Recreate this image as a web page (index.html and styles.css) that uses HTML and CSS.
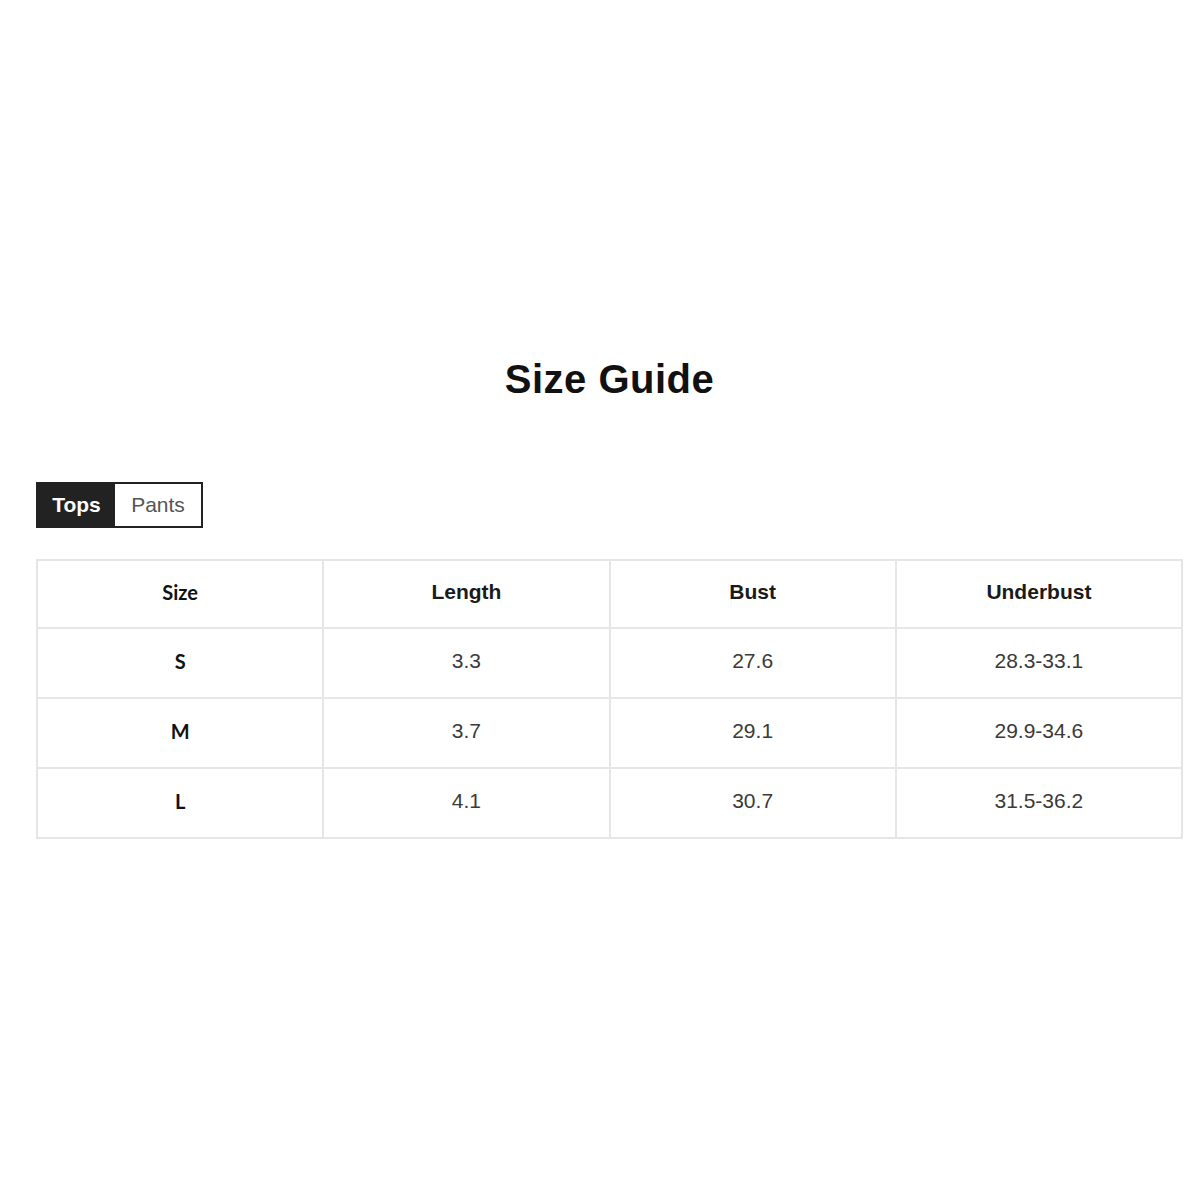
FILE: index.html
```html
<!DOCTYPE html>
<html>
<head>
<meta charset="utf-8">
<link rel="stylesheet" href="styles.css">
</head>
<body>
<div class="page">
  <h1 class="title">Size Guide</h1>
  <div class="tabs">
    <div class="tab active">Tops</div>
    <div class="tab">Pants</div>
  </div>
  <table class="sizes">
    <thead>
      <tr><th class="first">Size</th><th>Length</th><th>Bust</th><th>Underbust</th></tr>
    </thead>
    <tbody>
      <tr><td class="first">S</td><td>3.3</td><td>27.6</td><td>28.3-33.1</td></tr>
      <tr><td class="first">M</td><td>3.7</td><td>29.1</td><td>29.9-34.6</td></tr>
      <tr><td class="first">L</td><td>4.1</td><td>30.7</td><td>31.5-36.2</td></tr>
    </tbody>
  </table>
</div>
</body>
</html>
```
FILE: styles.css
```css
html, body {
  margin: 0;
  padding: 0;
  background: #fff;
}
.page {
  width: 1147px;
  margin-left: 36px;
  padding-top: 355px;
  font-family: "Liberation Sans", Arial, sans-serif;
  color: #111;
}
.title {
  margin: 0;
  text-align: center;
  font-size: 40px;
  line-height: 48px;
  font-weight: bold;
  letter-spacing: 0.5px;
  color: #111;
}
.tabs {
  display: flex;
  width: fit-content;
  margin-top: 79px;
  border: 2px solid #222;
  height: 42px;
}
.tab {
  display: flex;
  align-items: center;
  justify-content: center;
  font-size: 21px;
  color: #555;
}
.tab.active {
  width: 77px;
  background: #222;
  color: #fff;
  font-weight: bold;
}
.tab:not(.active) {
  width: 86px;
}
.sizes {
  margin-top: 31px;
  width: 1147px;
  border-collapse: collapse;
  table-layout: fixed;
}
.sizes th, .sizes td {
  border: 2px solid #e6e6e6;
  height: 64px;
  padding: 0 0 4px;
  text-align: center;
  font-size: 21px;
}
.sizes th {
  height: 62px;
  font-weight: bold;
  color: #1a1a1a;
}
.sizes td {
  color: #3a3a3a;
}
.sizes .first {
  font-family: Lato, "Liberation Sans", sans-serif;
  font-weight: bold;
  font-size: 20px;
  color: #111;
}
```
